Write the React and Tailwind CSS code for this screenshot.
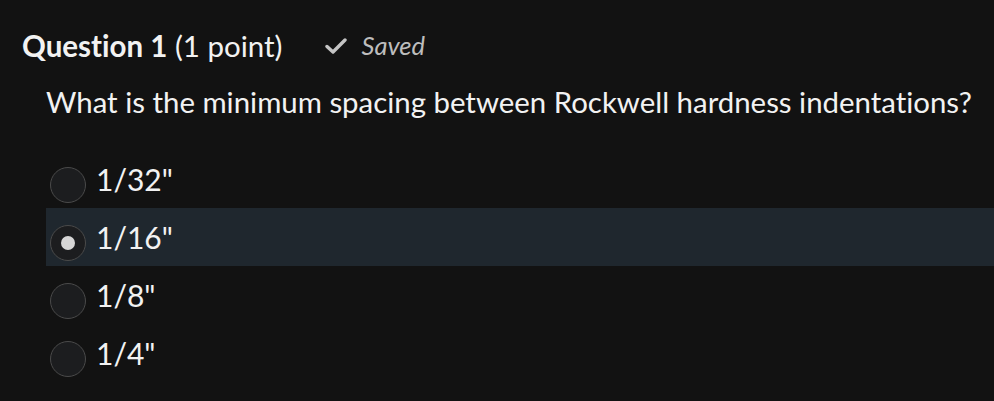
import React from "react";

const options = ['1/32"', '1/16"', '1/8"', '1/4"'];

function Radio({ checked }) {
  return (
    <span className="flex h-[36px] w-[36px] shrink-0 items-center justify-center rounded-full border border-[#4a4a4a] bg-[#1c1d1f] mt-[11px]">
      {checked && <span className="h-[14px] w-[14px] rounded-full bg-[#d6d6d6]" />}
    </span>
  );
}

export default function App() {
  return (
    <div className="min-h-[401px] w-full bg-[#121212] text-[#f2f2f2] overflow-hidden" style={{ fontFamily: "Lato, 'Noto Sans', sans-serif", fontVariantLigatures: "none" }}>
      <div className="flex items-center pl-[22px] pt-[27px] h-[64px]">
        <h2 className="text-[29.5px] leading-none text-[#f2f2f2]">
          <span className="font-bold">Question 1</span> <span>(1 point)</span>
        </h2>
        <span className="ml-[42px] flex items-center gap-[15px] text-[#bdbdbd]">
          <svg width="22" height="18" viewBox="0 0 22 18" fill="none">
            <path d="M2 9.5 L8 15 L20 3" stroke="#c4c4c4" strokeWidth="3.4" strokeLinecap="round" strokeLinejoin="round" />
          </svg>
          <span className="italic text-[25.5px] leading-none">Saved</span>
        </span>
      </div>
      <p className="pl-[46px] pt-[23px] text-[29.4px] leading-none">
        What is the minimum spacing between Rockwell hardness indentations?
      </p>
      <div className="mt-[34px] pl-[46px] flex flex-col">
        {options.map((o, i) => (
          <div
            key={o}
            className={`flex h-[58px] items-center gap-[10px] pl-[4px] ${i === 1 ? "bg-[#1f272e]" : ""}`}
          >
            <Radio checked={i === 1} />
            <span className="text-[30px] leading-none">{o}</span>
          </div>
        ))}
      </div>
    </div>
  );
}
